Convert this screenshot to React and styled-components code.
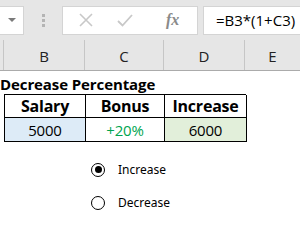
import React, { useState } from 'react'
import styled, { createGlobalStyle } from 'styled-components'

const GlobalStyle = createGlobalStyle`
  html, body {
    margin: 0;
    padding: 0;
    background: #fff;
  }
  body {
    width: 300px;
    height: 250px;
    overflow: hidden;
    font-family: "Open Sans", "Noto Sans", sans-serif;
  }
`

const Toolbar = styled.div`
  height: 40px;
  background: #e6e6e6;
  display: grid;
  grid-template-columns: 24px 38px 136px 1fr;
  align-items: center;
`

const Field = styled.div`
  height: 29px;
  background: #fff;
  border: 1px solid #d4d4d4;
  box-sizing: border-box;
  display: flex;
  align-items: center;
`

const NameBox = styled(Field)`
  border-left: none;
  justify-content: center;
`

const Grip = styled.div`
  display: flex;
  justify-content: center;
`

const FxBox = styled(Field)`
  padding-left: 16px;
`

const FxIcon = styled.span`
  display: flex;
  margin-right: ${p => p.gap}px;
`

const FormulaBox = styled(Field)`
  overflow: hidden;
  white-space: nowrap;
  margin-left: 5px;
  border-right: none;
  padding-left: 12px;
  font-size: 15px;
  color: #000;
`

const Fx = styled.span`
  font-family: "Liberation Serif", serif;
  font-style: italic;
  font-weight: bold;
  font-size: 16px;
  color: #8a8a8a;
`

const HeaderRow = styled.div`
  height: 31px;
  background: #e6e6e6;
  border-bottom: 1px solid #ababab;
  box-sizing: border-box;
  display: grid;
  grid-template-columns: 4px 81px 79px 81px 1fr;
`

const ColHead = styled.div`
  border-right: 1px solid #c6c6c6;
  display: flex;
  align-items: center;
  justify-content: center;
  font-size: 15px;
  color: #222;
  padding-top: 1px;
  &:last-child { border-right: none; }
`

const Sheet = styled.div`
  padding-top: 3px;
`

const Title = styled.div`
  font-weight: bold;
  font-size: 15px;
  line-height: 20px;
  color: #000;
  letter-spacing: -0.1px;
`

const Table = styled.div`
  margin: 0 0 0 4px;
  width: 242px;
  display: grid;
  grid-template-columns: 81px 79px 82px;
  border-top: 1.5px solid #000;
  border-left: 1.5px solid #000;
  box-sizing: border-box;
`

const Cell = styled.div`
  height: ${p => (p.head ? '23px' : '24px')};
  border-right: 1.5px solid #000;
  border-bottom: 1.5px solid #000;
  box-sizing: border-box;
  display: flex;
  align-items: center;
  justify-content: center;
  font-size: ${p => (p.head ? '16px' : '15px')};
  letter-spacing: -0.2px;
  font-weight: ${p => (p.head ? 'bold' : 'normal')};
  background: ${p => p.bg || '#fff'};
  color: ${p => p.color || '#000'};
`

const Options = styled.div`
  margin: 19px 0 0 91px;
  display: flex;
  flex-direction: column;
  gap: 16px;
`

const Option = styled.label`
  display: flex;
  align-items: center;
  gap: 13px;
  height: 17px;
  font-size: 12px;
  color: #000;
  font-family: "Noto Sans", "Open Sans", sans-serif;
  cursor: pointer;
`

const Dot = styled.span`
  width: 14px;
  height: 14px;
  border: 1.3px solid #000;
  border-radius: 50%;
  box-sizing: border-box;
  display: flex;
  align-items: center;
  justify-content: center;
  &::after {
    content: '';
    width: 7px;
    height: 7px;
    border-radius: 50%;
    background: ${p => (p.on ? '#000' : 'transparent')};
  }
`

const App = () => {
  const [choice, setChoice] = useState('Increase')
  return (
    <>
      <GlobalStyle />
      <Toolbar>
        <NameBox>
          <svg width="8" height="5" viewBox="0 0 8 5">
            <path d="M0 0 H8 L4 4 Z" fill="#7a7a7a" />
          </svg>
        </NameBox>
        <Grip>
          <svg width="3" height="13" viewBox="0 0 3 13">
            <rect x="0" y="0" width="3" height="3" fill="#b4b4b4" />
            <rect x="0" y="5" width="3" height="3" fill="#b4b4b4" />
            <rect x="0" y="10" width="3" height="3" fill="#b4b4b4" />
          </svg>
        </Grip>
        <FxBox>
          <FxIcon gap={24}>
            <svg width="14" height="14" viewBox="0 0 14 14">
              <path d="M1 1 L13 13 M13 1 L1 13" stroke="#c8c8c8" strokeWidth="1.6" fill="none" />
            </svg>
          </FxIcon>
          <FxIcon gap={33}>
            <svg width="16" height="13" viewBox="0 0 16 13">
              <path d="M1 7 L5.5 11.5 L15 1" stroke="#c8c8c8" strokeWidth="1.8" fill="none" />
            </svg>
          </FxIcon>
          <Fx>fx</Fx>
        </FxBox>
        <FormulaBox>=B3*(1+C3)</FormulaBox>
      </Toolbar>
      <HeaderRow>
        <ColHead />
        <ColHead>B</ColHead>
        <ColHead>C</ColHead>
        <ColHead>D</ColHead>
        <ColHead>E</ColHead>
      </HeaderRow>
      <Sheet>
        <Title>Decrease Percentage</Title>
        <Table>
          <Cell head>Salary</Cell>
          <Cell head>Bonus</Cell>
          <Cell head>Increase</Cell>
          <Cell bg="#ddebf7">5000</Cell>
          <Cell color="#00a550">+20%</Cell>
          <Cell bg="#e2efda">6000</Cell>
        </Table>
        <Options>
          {['Increase', 'Decrease'].map(o => (
            <Option key={o} onClick={() => setChoice(o)}>
              <Dot on={choice === o} />
              {o}
            </Option>
          ))}
        </Options>
      </Sheet>
    </>
  )
}

export default App
